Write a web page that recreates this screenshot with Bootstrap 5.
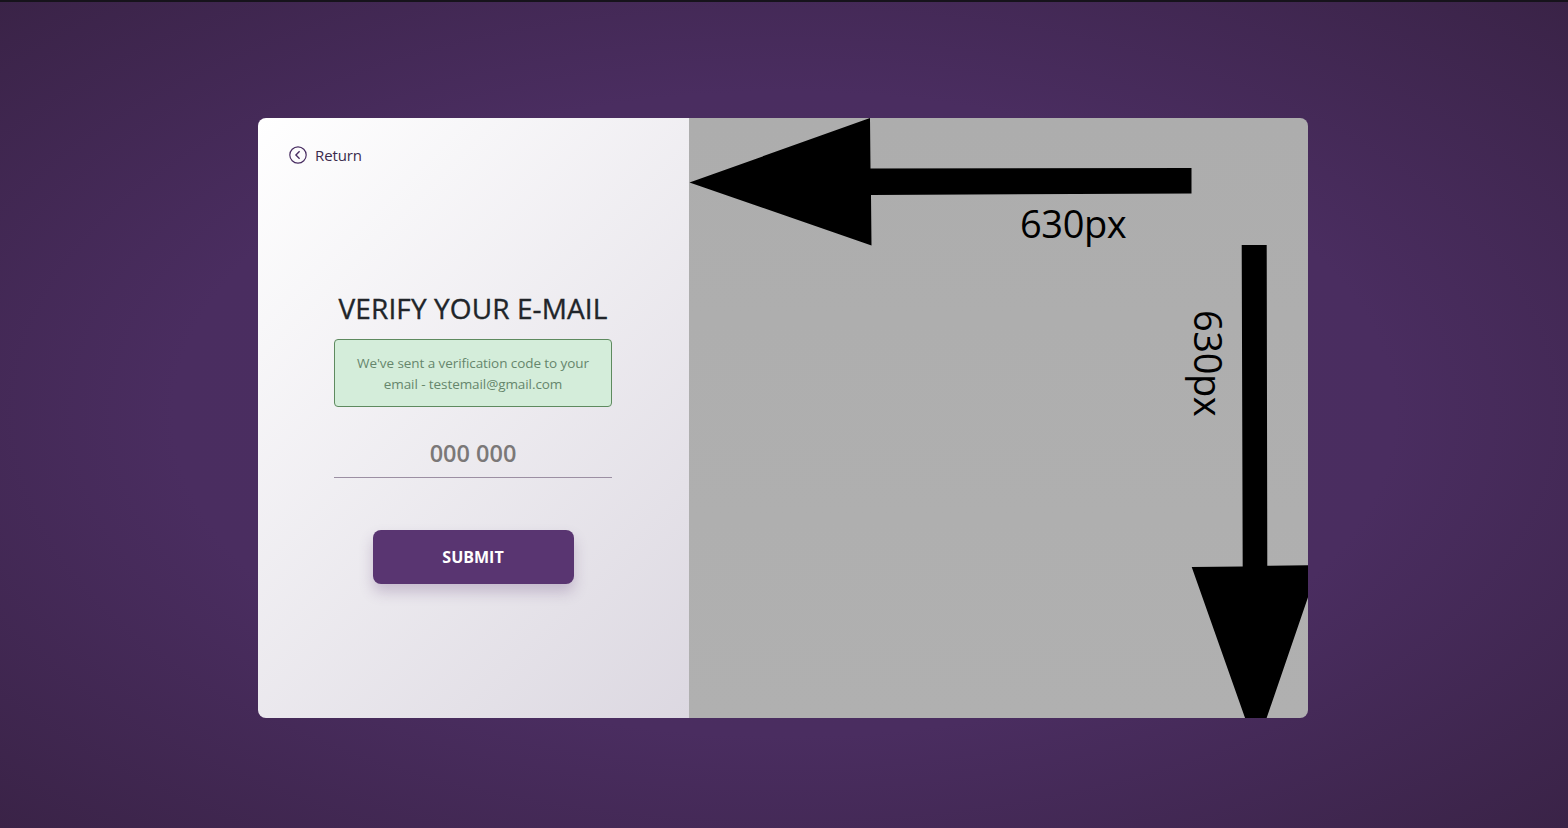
<!DOCTYPE html>
<html lang="en">
<head>
<meta charset="utf-8">
<title>Verify your e-mail</title>
<link href="https://cdn.jsdelivr.net/npm/bootstrap@5.3.0/dist/css/bootstrap.min.css" rel="stylesheet">
<style>
html,body{height:100%;}
body{font-family:"Open Sans","Noto Sans","Liberation Sans",sans-serif;background:radial-gradient(ellipse at center,#4b2d62 0%,#4a2d60 55%,#3a2347 100%);border-top:2px solid #16131b;overflow:hidden;}
.page-wrap{height:826px;padding:116px 2px 0 0;}
.auth-shell{width:1050px;height:600px;border-radius:8px;overflow:hidden;}
.form-pane{width:431px;background:linear-gradient(135deg,#ffffff 0%,#dcd8e1 100%);padding:0 77px 0 76px;position:relative;}
.return-link{color:#3a2a4c;font-size:15px;line-height:20px;gap:8px;padding:27px 0 0 31px;margin-left:-76px;text-decoration:none;font-weight:400;letter-spacing:-.1px;}
.verify-title{font-size:28px;line-height:36px;font-weight:500;color:#212529;margin:125px -10px 13px;white-space:nowrap;letter-spacing:.1px;-webkit-text-stroke:.35px #212529;}
.verify-note{height:68px;margin:0 0 29px;padding:13px 12px;background:#d4edda;border:1px solid #5e8a5f;border-radius:4px;color:#66866c;font-size:13.5px;line-height:21px;letter-spacing:-.08px;}
.code-input{display:block;width:100%;height:42px;border:0;border-bottom:1px solid #9c8fa3;background:transparent;text-align:center;font-size:23.5px;font-weight:600;padding:0 0 7px;outline:0;font-family:inherit;}
.code-input::placeholder{color:#7b7878;opacity:1;}
.submit-btn{display:block;width:201px;height:54px;margin:52px auto 0;background:#593571;border:0;border-radius:8px;color:#fff;font-weight:700;font-size:16px;box-shadow:0 8px 14px rgba(90,54,115,.25);}
.art-pane{flex:1;background:linear-gradient(180deg,#adadad,#b0b0b0);}
.art-pane svg{display:block;width:100%;height:100%;}
.art-label{font-family:"Open Sans","Noto Sans",sans-serif;font-size:38px;fill:#000;letter-spacing:-.4px;}
</style>
</head>
<body>
<div class="page-wrap d-flex justify-content-center align-items-start">
  <div class="auth-shell d-flex">
    <div class="form-pane text-center">
      <a href="#" class="return-link d-flex align-items-center text-start">
        <svg width="18" height="18" viewBox="0 0 18 18" fill="none" stroke="#4a2f63" stroke-width="1.2"><circle cx="9" cy="9" r="8.2"/><path d="M10.6 5.2 6.9 9l3.7 3.8" stroke-width="1.4"/></svg>
        <span>Return</span>
      </a>
      <h1 class="verify-title">VERIFY YOUR E-MAIL</h1>
      <p class="verify-note">We've sent a verification code to your email - testemail@gmail.com</p>
      <input class="code-input" type="text" placeholder="000 000" aria-label="Verification code">
      <button class="submit-btn" type="button">SUBMIT</button>
    </div>
    <div class="art-pane">
      <svg viewBox="0 0 619 600" role="img" aria-label="630px by 630px placeholder">
        <polygon points="0.5,64.5 181,0 181.5,50.5 502.5,50 502.5,75.5 182,77 182.5,127.5" fill="#000"/>
        <polygon points="552.7,127 577.7,127 578.3,447.7 630,447.2 567,631 502.7,449 553.7,448.5" fill="#000"/>
        <text class="art-label" x="331" y="120">630px</text>
        <text class="art-label" transform="translate(505,192) rotate(90)">630px</text>
      </svg>
    </div>
  </div>
</div>
<script src="https://cdn.jsdelivr.net/npm/bootstrap@5.3.0/dist/js/bootstrap.bundle.min.js"></script>
</body>
</html>
